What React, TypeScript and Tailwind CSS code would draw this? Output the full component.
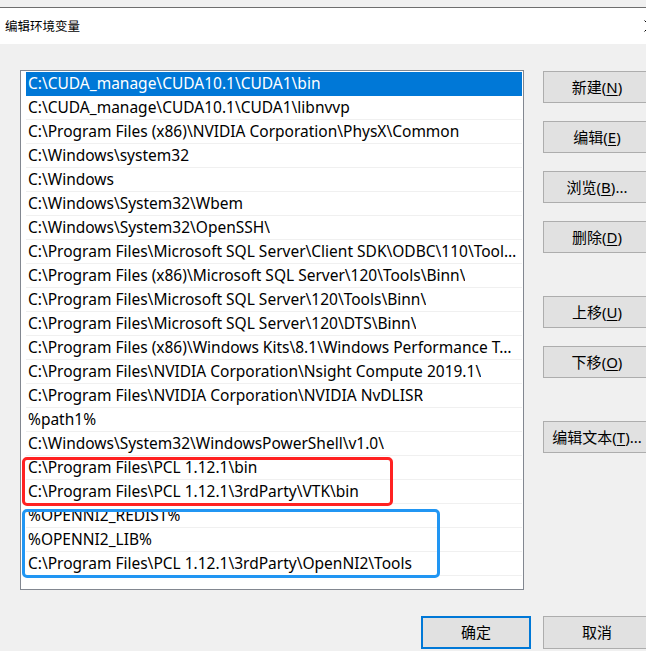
import React from "react";

const rows = [
  "C:\\CUDA_manage\\CUDA10.1\\CUDA1\\bin",
  "C:\\CUDA_manage\\CUDA10.1\\CUDA1\\libnvvp",
  "C:\\Program Files (x86)\\NVIDIA Corporation\\PhysX\\Common",
  "C:\\Windows\\system32",
  "C:\\Windows",
  "C:\\Windows\\System32\\Wbem",
  "C:\\Windows\\System32\\OpenSSH\\",
  "C:\\Program Files\\Microsoft SQL Server\\Client SDK\\ODBC\\110\\Tools\\Binn\\",
  "C:\\Program Files (x86)\\Microsoft SQL Server\\120\\Tools\\Binn\\",
  "C:\\Program Files\\Microsoft SQL Server\\120\\Tools\\Binn\\",
  "C:\\Program Files\\Microsoft SQL Server\\120\\DTS\\Binn\\",
  "C:\\Program Files (x86)\\Windows Kits\\8.1\\Windows Performance Toolkit\\",
  "C:\\Program Files\\NVIDIA Corporation\\Nsight Compute 2019.1\\",
  "C:\\Program Files\\NVIDIA Corporation\\NVIDIA NvDLISR",
  "%path1%",
  "C:\\Windows\\System32\\WindowsPowerShell\\v1.0\\",
  "C:\\Program Files\\PCL 1.12.1\\bin",
  "C:\\Program Files\\PCL 1.12.1\\3rdParty\\VTK\\bin",
  "%OPENNI2_REDIST%",
  "%OPENNI2_LIB%",
  "C:\\Program Files\\PCL 1.12.1\\3rdParty\\OpenNI2\\Tools",
];

function Btn({ label, u, rest, className = "" }: { label: string; u?: string; rest?: string; className?: string }) {
  return (
    <div
      className={`h-[32px] w-[108px] shrink-0 border border-[#adadad] bg-[#e1e1e1] flex items-center justify-center text-[15px] text-black ${className}`}
    >
      <span>
        {label}
        {u !== undefined && (
          <>
            (<span className="underline underline-offset-2">{u}</span>){rest}
          </>
        )}
      </span>
    </div>
  );
}

export default function App() {
  return (
    <div className="relative w-[646px] h-[651px] overflow-hidden bg-[#f0f0f0] font-['Noto_Sans','Noto_Sans_CJK_SC',sans-serif] text-black">
      <div className="h-[7px] bg-[#f0f0f0]" />
      <div className="h-px bg-[#6e6e6e]" />
      <div className="relative h-[36px] bg-white flex items-center pl-[5px] text-[12.5px] font-['Noto_Sans_CJK_SC',sans-serif]">
        编辑环境变量
        <svg className="absolute left-[644px] top-[12px]" width="12" height="12" viewBox="0 0 12 12">
          <path d="M0.5 0.5 L11.5 11.5 M11.5 0.5 L0.5 11.5" stroke="#000" strokeWidth="1" />
        </svg>
      </div>

      <div className="flex pt-[26px] pl-[20px]">
        <div className="relative w-[504px] h-[520px] border border-[#828790] bg-white pt-px pl-[5px] pr-px">
          {rows.map((r, i) => (
            <div
              key={i}
              className={`h-6 flex items-center pl-[2px] pr-[3px] border-b text-[15.5px] leading-[23px] whitespace-nowrap overflow-hidden ${
                i === 0 ? "bg-[#0078d7] text-white border-[#0078d7]" : "border-[#f0f0f0]"
              }`}
            >
              <span className="block overflow-hidden text-ellipsis">{r}</span>
            </div>
          ))}
          <div className="absolute left-px top-[386px] w-[371px] h-[49px] border-[3px] border-[#ff2222] rounded-[5px]" />
          <div className="absolute left-px top-[438px] w-[418px] h-[69px] border-[3px] border-[#2196f3] rounded-[5px]" />
        </div>

        <div className="ml-[19px] pt-px flex flex-col">
          <Btn label="新建" u="N" />
          <Btn label="编辑" u="E" className="mt-[18px]" />
          <Btn label="浏览" u="B" rest="..." className="mt-[18px]" />
          <Btn label="删除" u="D" className="mt-[18px]" />
          <Btn label="上移" u="U" className="mt-[43px]" />
          <Btn label="下移" u="O" className="mt-[18px]" />
          <Btn label="编辑文本" u="T" rest="..." className="mt-[43px]" />
        </div>
      </div>

      <div className="flex pl-[421px] pt-[26px]">
        <div className="h-[33px] w-[110px] shrink-0 border-2 border-[#0078d7] bg-[#e1e1e1] flex items-center justify-center text-[15px]">
          确定
        </div>
        <div className="ml-[12px] h-[33px] w-[108px] shrink-0 border border-[#adadad] bg-[#e1e1e1] flex items-center justify-center text-[15px]">
          取消
        </div>
      </div>
    </div>
  );
}
